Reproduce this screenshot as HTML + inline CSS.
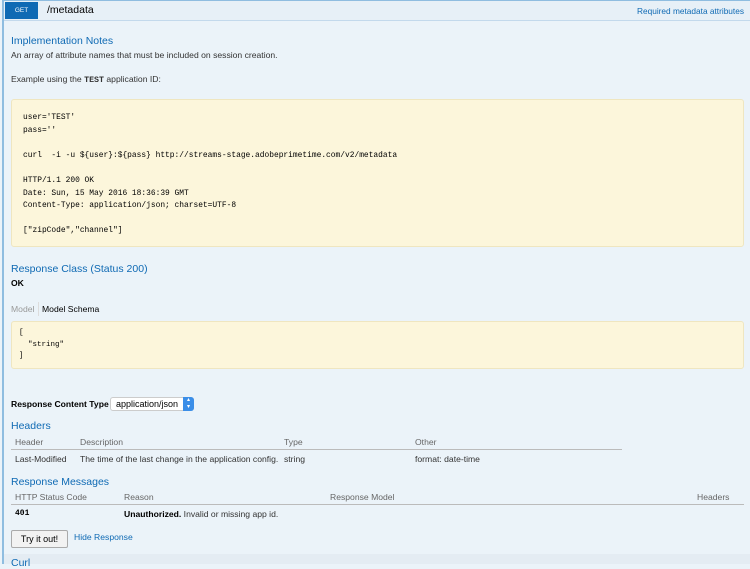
<!DOCTYPE html>
<html><head><meta charset="utf-8"><style>
*{margin:0;padding:0;box-sizing:border-box}
body{width:750px;height:564px;overflow:hidden;background:#ebf3f9;font-family:"Liberation Sans",sans-serif;font-size:8.6px;color:#333;position:relative}
.a{position:absolute;white-space:nowrap}
.blue{color:#0f6ab4}
.mono{font-family:"Liberation Mono","DejaVu Sans Mono",monospace}
</style></head><body>
<div class="a" style="left:2px;top:0;width:2px;height:564px;background:#8fbde0"></div>
<div class="a" style="left:4px;top:0;width:746px;height:21px;background:#e7f0f7;border-bottom:1px solid #c3d9ec;border-top:1px solid #8fbde0"></div>
<div class="a" style="left:5px;top:2px;width:33px;height:17px;background:#0f6ab4;color:#fff;font-size:6.5px;text-align:center;line-height:17px">GET</div>
<div class="a" style="left:47px;top:4px;font-size:10.5px;color:#000">/metadata</div>
<div class="a blue" style="right:6px;top:6px;font-size:8.3px">Required metadata attributes</div>

<div class="a blue" style="left:11px;top:35px;font-size:10.5px">Implementation Notes</div>
<div class="a" style="left:11px;top:50px">An array of attribute names that must be included on session creation.</div>
<div class="a" style="left:11px;top:74px">Example using the <span class="mono" style="font-weight:bold;font-size:8.3px">TEST</span> application ID:</div>

<div class="a" style="left:11px;top:99px;width:733px;height:148px;background:#fcf6db;border:1px solid #efe6c0;border-radius:3px"></div>
<div class="a mono" style="left:23px;top:112px;font-size:7.9px;line-height:12.6px;color:#000;white-space:pre">user='TEST'
pass=''

curl  -i -u ${user}:${pass} http://streams-stage.adobeprimetime.com/v2/metadata

HTTP/1.1 200 OK
Date: Sun, 15 May 2016 18:36:39 GMT
Content-Type: application/json; charset=UTF-8

["zipCode","channel"]</div>

<div class="a blue" style="left:11px;top:263px;font-size:10.5px">Response Class (Status 200)</div>
<div class="a" style="left:11px;top:278px;font-weight:bold;color:#000">OK</div>
<div class="a" style="left:11px;top:304px;color:#999">Model</div>
<div class="a" style="left:38px;top:302px;width:1px;height:14px;background:#ddd"></div>
<div class="a" style="left:42px;top:304px;color:#000">Model Schema</div>
<div class="a" style="left:11px;top:321px;width:733px;height:48px;background:#fcf6db;border:1px solid #efe6c0;border-radius:3px"></div>
<div class="a mono" style="left:19px;top:328px;font-size:7.5px;line-height:11.5px;color:#000;white-space:pre">[
  "string"
]</div>

<div class="a" style="left:11px;top:399px;font-weight:bold;color:#000;font-size:8.6px">Response Content Type</div>
<div class="a" style="left:110px;top:397px;width:84px;height:14px;background:#fff;border:1px solid #ccc;border-radius:3px;font-size:9px;color:#000;padding-left:5px;line-height:12px">application/json</div>
<div class="a" style="left:183px;top:397px;width:11px;height:14px;background:#3b8ee8;border-radius:0 3px 3px 0;color:#fff;font-size:6px;text-align:center;line-height:7px">▴<br>▾</div>

<div class="a blue" style="left:11px;top:420px;font-size:10.5px">Headers</div>
<div class="a" style="left:15px;top:437px;color:#666">Header</div>
<div class="a" style="left:80px;top:437px;color:#666">Description</div>
<div class="a" style="left:284px;top:437px;color:#666">Type</div>
<div class="a" style="left:415px;top:437px;color:#666">Other</div>
<div class="a" style="left:11px;top:449px;width:611px;height:1px;background:#bbb"></div>
<div class="a" style="left:15px;top:454px">Last-Modified</div>
<div class="a" style="left:80px;top:454px">The time of the last change in the application config.</div>
<div class="a" style="left:284px;top:454px">string</div>
<div class="a" style="left:415px;top:454px">format: date-time</div>

<div class="a blue" style="left:11px;top:476px;font-size:10.5px">Response Messages</div>
<div class="a" style="left:15px;top:492px;color:#666">HTTP Status Code</div>
<div class="a" style="left:124px;top:492px;color:#666">Reason</div>
<div class="a" style="left:330px;top:492px;color:#666">Response Model</div>
<div class="a" style="left:697px;top:492px;color:#666">Headers</div>
<div class="a" style="left:11px;top:504px;width:733px;height:1px;background:#bbb"></div>
<div class="a mono" style="left:15px;top:509px;font-size:8px;color:#000;font-weight:bold">401</div>
<div class="a" style="left:124px;top:509px"><b style="color:#000">Unauthorized.</b> Invalid or missing app id.</div>

<div class="a" style="left:11px;top:530px;width:57px;height:18px;background:#f2f2f2;border:1px solid #aaa;border-radius:2px;font-size:9px;color:#000;text-align:center;line-height:16px">Try it out!</div>
<div class="a blue" style="left:74px;top:532px">Hide Response</div>
<div class="a" style="left:4px;top:554px;width:746px;height:10px;background:#e4ecf3"></div>
<div class="a blue" style="left:11px;top:557px;font-size:10.5px">Curl</div>
</body></html>
